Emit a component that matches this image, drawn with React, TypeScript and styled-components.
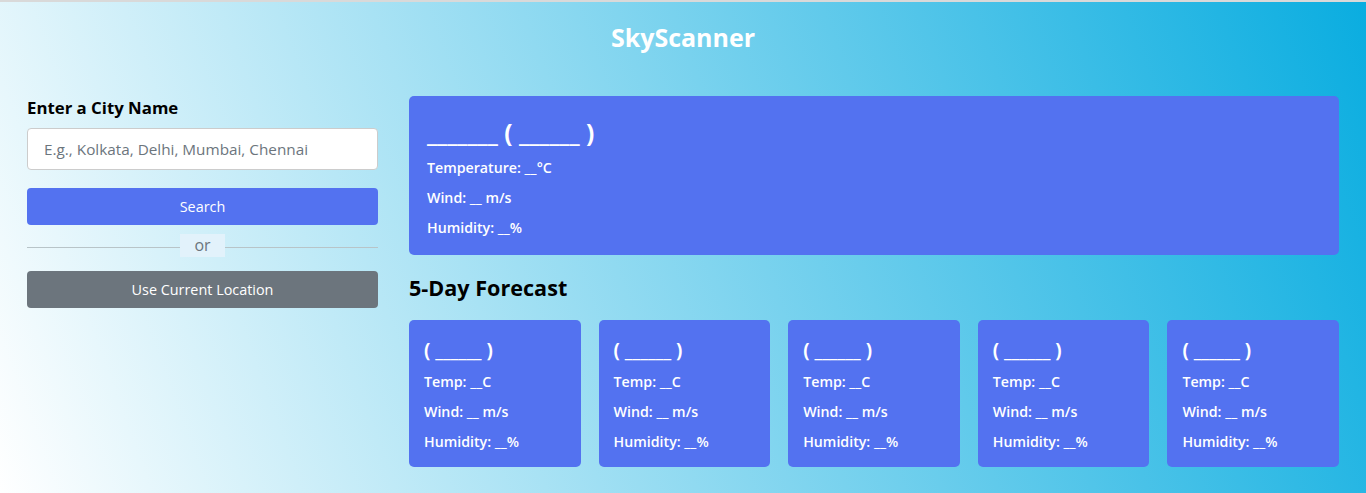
import React from "react";
import styled, { createGlobalStyle } from "styled-components";

const GlobalStyle = createGlobalStyle`
  * { box-sizing: border-box; }
  html, body { margin: 0; padding: 0; }
  body { font-family: "Open Sans", "Noto Sans", sans-serif; }
`;

const Page = styled.div`
  min-height: 100vh;
  border-top: 2px solid #d9d9d9;
  background: linear-gradient(70deg, #ffffff 0%, #0aade0 100%);
`;

const Title = styled.h1`
  margin: 19px 0 43px;
  font-size: 25px;
  line-height: 32px;
  font-weight: 700;
  color: #ffffff;
  text-align: center;
`;

const Container = styled.div`
  display: flex;
  gap: 31px;
  padding: 0 27px;
`;

const InputPanel = styled.div`
  width: 351px;
  flex-shrink: 0;
  display: flex;
  flex-direction: column;
`;

const Label = styled.h3`
  margin: 1px 0 9px;
  font-size: 16.8px;
  line-height: 22px;
  font-weight: 700;
  color: #000;
`;

const CityInput = styled.input`
  height: 42px;
  width: 100%;
  padding: 0 16px;
  border: 1px solid #cccccc;
  border-radius: 4px;
  background: #fff;
  font-family: inherit;
  font-size: 15.3px;
  outline: none;
  &::placeholder { color: #6c757d; }
`;

const Button = styled.button<{ $variant: "primary" | "secondary" }>`
  height: 37px;
  width: 100%;
  margin-top: ${(p) => (p.$variant === "primary" ? "18px" : "0")};
  border: none;
  border-radius: 4px;
  background: ${(p) => (p.$variant === "primary" ? "#5372f0" : "#6c757d")};
  color: #fff;
  font-family: inherit;
  font-size: 14.4px;
  cursor: pointer;
`;

const Separator = styled.div`
  position: relative;
  height: 23px;
  margin: 9px 0 14px;
  display: flex;
  align-items: center;
  justify-content: center;
  &::before {
    content: "";
    position: absolute;
    left: 0;
    right: 0;
    top: 13px;
    height: 1px;
    background: #b8c4c8;
  }
`;

const SeparatorText = styled.span`
  position: relative;
  padding: 0 14px;
  height: 23px;
  line-height: 23px;
  background: #e2f2fb;
  color: #6c757d;
  font-size: 16px;
`;

const WeatherPanel = styled.div`
  flex: 1;
  display: flex;
  flex-direction: column;
`;

const CurrentCard = styled.div`
  background: #5372f0;
  border-radius: 5px;
  padding: 22px 18px 17px;
  color: #fff;
`;

const CurrentTitle = styled.h2`
  margin: 0;
  font-size: 24.6px;
  line-height: 30px;
  font-weight: 700;
`;

const DataRow = styled.h6`
  margin: 10px 0 0;
  font-size: 14.2px;
  line-height: 20px;
  font-weight: 600;
`;

const ForecastHeading = styled.h2`
  margin: 19px 0 18px;
  font-size: 21.6px;
  line-height: 28px;
  font-weight: 700;
  color: #000;
`;

const CardList = styled.ul`
  list-style: none;
  margin: 0;
  padding: 0;
  display: grid;
  grid-template-columns: repeat(5, 1fr);
  gap: 18px;
`;

const DayCard = styled.li`
  background: #5372f0;
  border-radius: 5px;
  padding: 18px 15px 15px;
  color: #fff;
`;

const DayTitle = styled.h3`
  margin: 0;
  font-size: 18.8px;
  line-height: 24px;
  font-weight: 700;
`;

export default function App() {
  const days = [0, 1, 2, 3, 4];
  return (
    <>
      <GlobalStyle />
      <Page>
        <Title>SkyScanner</Title>
        <Container>
          <InputPanel>
            <Label>Enter a City Name</Label>
            <CityInput placeholder="E.g., Kolkata, Delhi, Mumbai, Chennai" />
            <Button $variant="primary">Search</Button>
            <Separator>
              <SeparatorText>or</SeparatorText>
            </Separator>
            <Button $variant="secondary">Use Current Location</Button>
          </InputPanel>
          <WeatherPanel>
            <CurrentCard>
              <CurrentTitle>_______ ( ______ )</CurrentTitle>
              <DataRow>Temperature: __°C</DataRow>
              <DataRow>Wind: __ m/s</DataRow>
              <DataRow>Humidity: __%</DataRow>
            </CurrentCard>
            <ForecastHeading>5-Day Forecast</ForecastHeading>
            <CardList>
              {days.map((d) => (
                <DayCard key={d}>
                  <DayTitle>( ______ )</DayTitle>
                  <DataRow>Temp: __C</DataRow>
                  <DataRow>Wind: __ m/s</DataRow>
                  <DataRow>Humidity: __%</DataRow>
                </DayCard>
              ))}
            </CardList>
          </WeatherPanel>
        </Container>
      </Page>
    </>
  );
}
